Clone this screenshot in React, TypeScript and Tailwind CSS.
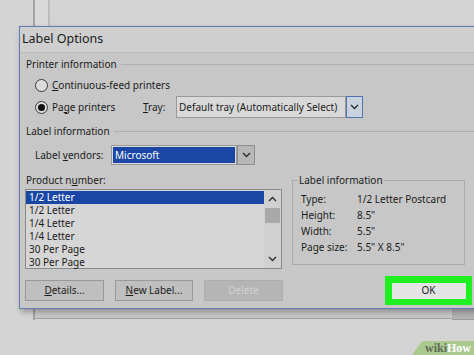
import React from "react";

const Chevron = ({ up = false }: { up?: boolean }) => (
  <svg width="9" height="6" viewBox="0 0 9 6" className="block">
    <polyline
      points={up ? "1,5 4.5,1.5 8,5" : "1,1 4.5,4.5 8,1"}
      fill="none"
      stroke="#2a2a2a"
      strokeWidth="1.3"
    />
  </svg>
);

const Radio = ({ checked }: { checked?: boolean }) => (
  <div className="w-[13px] h-[13px] rounded-full border border-[#3a3a3a] bg-[#dcdcdc] flex items-center justify-center shrink-0">
    {checked && <div className="w-[7px] h-[7px] rounded-full bg-[#111]" />}
  </div>
);

const Heading = ({ children }: { children: React.ReactNode }) => (
  <div className="flex items-center h-[14px] pl-[6px]">
    <span className="whitespace-nowrap">{children}</span>
    <div className="flex-1 h-px bg-[#b0b0b0] ml-[4px]" />
  </div>
);

const rows = ["1/2 Letter", "1/2 Letter", "1/4 Letter", "1/4 Letter", "30 Per Page", "30 Per Page"];

export default function App() {
  return (
    <div className="relative w-[474px] h-[355px] overflow-hidden bg-[#d4d4d4] font-['Noto_Sans',sans-serif] text-[#1b1b1b]">
      {/* back window */}
      <div className="absolute left-[33px] top-0 w-[2px] h-[320px] bg-[#a3a3a3]" />
      <div className="absolute left-[35px] top-0 w-[13px] h-[26px] bg-[#d9d9d9]" />
      <div className="absolute left-[48px] top-0 w-[2px] h-[26px] bg-[#bcbcbc]" />
      <div className="absolute left-[35px] top-[300px] w-[420px] h-[19px] bg-[#c9c9c9] border-b border-[#a2a2a2]" />
      <div className="absolute left-[452px] top-[300px] w-[30px] h-[20px] bg-[#b3b3b3] border-b border-[#9a9a9a]" />

      {/* dialog */}
      <div className="absolute left-[19px] top-[26px] w-[470px] h-[283px] flex flex-col border-t border-l border-b border-[#5f7db5] shadow-[2px_3px_6px_rgba(0,0,0,0.3)]">
        <div className="h-[25px] bg-[#cfcfcf] flex items-center pl-[2px] text-[12.5px]">Label Options</div>
        <div className="flex-1 flex flex-col bg-[#c7c7c7] border-t border-[#bcbcbc] text-[10px]">
          <div className="mt-[4px]">
            <Heading>Printer information</Heading>
          </div>
          <div className="mt-[6px] h-[16px] flex items-center pl-[15px] gap-[4px]">
            <Radio />
            <span>
              <span className="underline">C</span>ontinuous-feed printers
            </span>
          </div>
          <div className="mt-[3px] h-[22px] flex items-center pl-[15px]">
            <Radio checked />
            <span className="w-[91px] ml-[4px]">
              Pa<span className="underline">g</span>e printers
            </span>
            <span className="w-[33px]">
              <span className="underline">T</span>ray:
            </span>
            <div className="w-[170px] h-[22px] bg-[#d9d9d9] border border-[#9a9a9a] flex items-center pl-[2px]">
              Default tray (Automatically Select)
            </div>
            <div className="w-[17px] h-[22px] bg-[#c9d3df] border border-[#4f74b0] flex items-center justify-center">
              <Chevron />
            </div>
          </div>
          <div className="mt-[6px]">
            <Heading>Label information</Heading>
          </div>
          <div className="mt-[7px] h-[20px] flex items-center pl-[15px]">
            <span className="w-[76px]">
              Label <span className="underline">v</span>endors:
            </span>
            <div className="w-[126px] h-[20px] bg-[#d9d9d9] border border-[#9a9a9a] p-[1px]">
              <div className="h-full bg-[#1a47a5] text-white flex items-center pl-[2px]">Microsoft</div>
            </div>
            <div className="w-[18px] h-[20px] bg-[#b7b7b7] border border-[#8e8e8e] flex items-center justify-center">
              <Chevron />
            </div>
          </div>

          <div className="flex mt-[8px]">
            <div className="ml-[5px] w-[257px] flex flex-col">
              <div className="h-[14px] flex items-center pl-[1px]">
                Product n<span className="underline">u</span>mber:
              </div>
              <div className="mt-[2px] h-[80px] border border-[#8a8a8a] bg-[#d6d6d6] flex">
                <div className="flex-1 flex flex-col pt-[1px]">
                  {rows.map((r, i) => (
                    <div
                      key={i}
                      className={
                        "h-[13px] flex items-center pl-[3px] " +
                        (i === 0 ? "bg-[#1a47a5] text-white" : "")
                      }
                    >
                      {r}
                    </div>
                  ))}
                </div>
                <div className="w-[17px] bg-[#d0d0d0] flex flex-col items-center">
                  <div className="h-[18px] flex items-center justify-center">
                    <Chevron up />
                  </div>
                  <div className="w-[15px] h-[15px] bg-[#a9a9a9]" />
                  <div className="flex-1" />
                  <div className="h-[18px] flex items-center justify-center">
                    <Chevron />
                  </div>
                </div>
              </div>
            </div>
            <div className="ml-[10px] mt-[7px] w-[173px] h-[85px] relative border border-[#aaaaaa]">
              <span className="absolute left-[5px] -top-[8px] px-[1px] bg-[#c7c7c7] leading-[14px]">Label information</span>
              <div className="pt-[10px] pl-[8px] flex flex-col">
                {[
                  ["Type:", "1/2 Letter Postcard"],
                  ["Height:", "8.5\""],
                  ["Width:", "5.5\""],
                  ["Page size:", "5.5\" X 8.5\""],
                ].map(([k, v]) => (
                  <div key={k} className="h-[16px] flex items-center">
                    <span className="w-[56px]">{k}</span>
                    <span>{v}</span>
                  </div>
                ))}
              </div>
            </div>
          </div>

          <div className="mt-[11px] h-[21px] flex items-center">
            <div className="ml-[5px] flex gap-[11px]">
              <div className="w-[79px] h-[21px] bg-[#bfbfbf] border border-[#999] flex items-center justify-center">
                <span>
                  <span className="underline">D</span>etails...
                </span>
              </div>
              <div className="w-[78px] h-[21px] bg-[#bfbfbf] border border-[#999] flex items-center justify-center">
                <span>
                  <span className="underline">N</span>ew Label...
                </span>
              </div>
              <div className="w-[79px] h-[21px] bg-[#b5b5b5] border border-[#adadad] flex items-center justify-center text-[#d2d2d2]">
                Delete
              </div>
            </div>
            <div className="ml-[102px] w-[87px] h-[29px] shrink-0 bg-[#1ff01f] flex items-center justify-center">
              <div className="w-[74px] h-[16px] bg-[#e4e4e4] flex items-center justify-center">OK</div>
            </div>
          </div>
        </div>
      </div>

      {/* watermark */}
      <div className="absolute right-0 bottom-0 w-[62px] h-[14px] bg-[#a9c98f] [clip-path:polygon(10px_0,100%_0,100%_100%,0_100%)] flex items-center justify-end pr-[3px] font-['Liberation_Serif',serif] font-bold text-[12px] leading-none">
        <span className="text-[#5e6b55]">wiki</span>
        <span className="text-white">How</span>
      </div>
    </div>
  );
}
